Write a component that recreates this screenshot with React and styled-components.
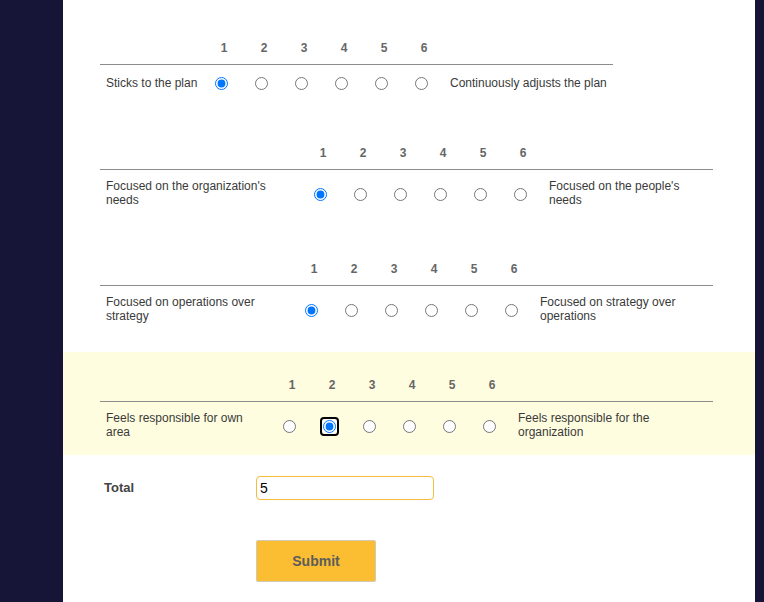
import * as React from "react";
import styled, { createGlobalStyle } from "styled-components";

const GlobalStyle = createGlobalStyle`
    body {
        margin: 0;
        background-color: #161538;
        font-family: "Liberation Sans", Arial, sans-serif;
    }
`;

const Page = styled.div`
    width: 692px;
    min-height: 602px;
    margin-left: 63px;
    padding-top: 15px;
    box-sizing: border-box;
    background-color: #ffffff;
`;

const Block = styled.div`
    padding: 25px 0 9px 37px;
    margin-bottom: 13px;
    background-color: ${props => props.$active ? "#fffde0" : "transparent"};
`;

const Scale = styled.div`
    display: grid;
    grid-template-columns: ${props => `${props.$left}px repeat(6, 40px) ${props.$right}px`};
`;

const HeadCell = styled.div`
    font-size: 12px;
    line-height: 14px;
    font-weight: bold;
    color: #666666;
    text-align: center;
    padding: 1px 0 9px 2px;
    border-bottom: 1px solid #8c8c8c;
`;

const LabelCell = styled.div`
    display: flex;
    align-items: center;
    padding: 9px 0 7px ${props => props.$pad}px;
    font-size: 12px;
    line-height: 14px;
    color: #3a3a3a;
`;

const LabelText = styled.span`
    max-width: ${props => props.$max ? `${props.$max}px` : "none"};
`;

const RadioCell = styled.div`
    display: flex;
    align-items: center;
    justify-content: center;
    padding: 8px 0;
`;

const Radio = styled.input`
    width: 13px;
    height: 13px;
    margin: 4px 4px 0 0;
    accent-color: #0075ff;
`;

const FocusRing = styled.span`
    display: inline-flex;
    margin: 4px 4px 0 0;
    padding: 1px;
    border: 2px solid #000000;
    border-radius: 4px;
    background-color: #ffffff;

    ${Radio} {
        margin: 0;
    }
`;

const TotalRow = styled.div`
    display: grid;
    grid-template-columns: 156px 178px;
    align-items: center;
    padding: 8px 0 0 37px;
`;

const TotalLabel = styled.div`
    padding: 0 0 2px 4px;
    font-size: 13px;
    font-weight: bold;
    color: #444444;
`;

const TotalInput = styled.input`
    width: 178px;
    height: 24px;
    box-sizing: border-box;
    padding: 1px 3px;
    border: 1px solid #f6bd3c;
    border-radius: 4px;
    font-family: "Liberation Sans", Arial, sans-serif;
    font-size: 14px;
    color: #000000;
    outline: none;
`;

const SubmitRow = styled.div`
    padding: 40px 0 0 193px;
`;

const SubmitButton = styled.button`
    width: 120px;
    height: 42px;
    background-color: #fbbe33;
    border: 1px solid #d2c9b8;
    border-radius: 2px;
    font-family: "Liberation Sans", Arial, sans-serif;
    font-size: 14px;
    font-weight: bold;
    color: #5c5c5c;
`;

const questions = [
    { id: "plan", left: "Sticks to the plan", right: "Continuously adjusts the plan", leftCol: 103, rightCol: 170, value: 1 },
    { id: "focus", left: "Focused on the organization's needs", right: "Focused on the people's needs", leftCol: 202, rightCol: 171, leftMax: 165, rightMax: 140, value: 1 },
    { id: "ops", left: "Focused on operations over strategy", right: "Focused on strategy over operations", leftCol: 193, rightCol: 180, leftMax: 160, rightMax: 150, value: 1 },
    { id: "resp", left: "Feels responsible for own area", right: "Feels responsible for the organization", leftCol: 171, rightCol: 202, leftMax: 150, rightMax: 150, value: 2, focused: true },
];

const scale = [1, 2, 3, 4, 5, 6];

const noop = () => {};

const Question = ({ q }) => (
    <Block $active={q.focused}>
        <Scale $left={q.leftCol} $right={q.rightCol}>
            <HeadCell />
            {scale.map(n => <HeadCell key={`h-${q.id}-${n}`}>{n}</HeadCell>)}
            <HeadCell />

            <LabelCell $pad={6}><LabelText $max={q.leftMax}>{q.left}</LabelText></LabelCell>
            {scale.map(n => {
                const radio = <Radio type="radio" name={q.id} checked={q.value === n} onChange={noop} />;
                return (
                    <RadioCell key={`r-${q.id}-${n}`}>
                        {q.focused && q.value === n ? <FocusRing>{radio}</FocusRing> : radio}
                    </RadioCell>
                );
            })}
            <LabelCell $pad={7}><LabelText $max={q.rightMax}>{q.right}</LabelText></LabelCell>
        </Scale>
    </Block>
);

export default function App() {
    return (
        <Page>
            <GlobalStyle />
            {questions.map(q => <Question key={q.id} q={q} />)}
            <TotalRow>
                <TotalLabel>Total</TotalLabel>
                <TotalInput type="text" value="5" onChange={noop} />
            </TotalRow>
            <SubmitRow>
                <SubmitButton type="button">Submit</SubmitButton>
            </SubmitRow>
        </Page>
    );
}
